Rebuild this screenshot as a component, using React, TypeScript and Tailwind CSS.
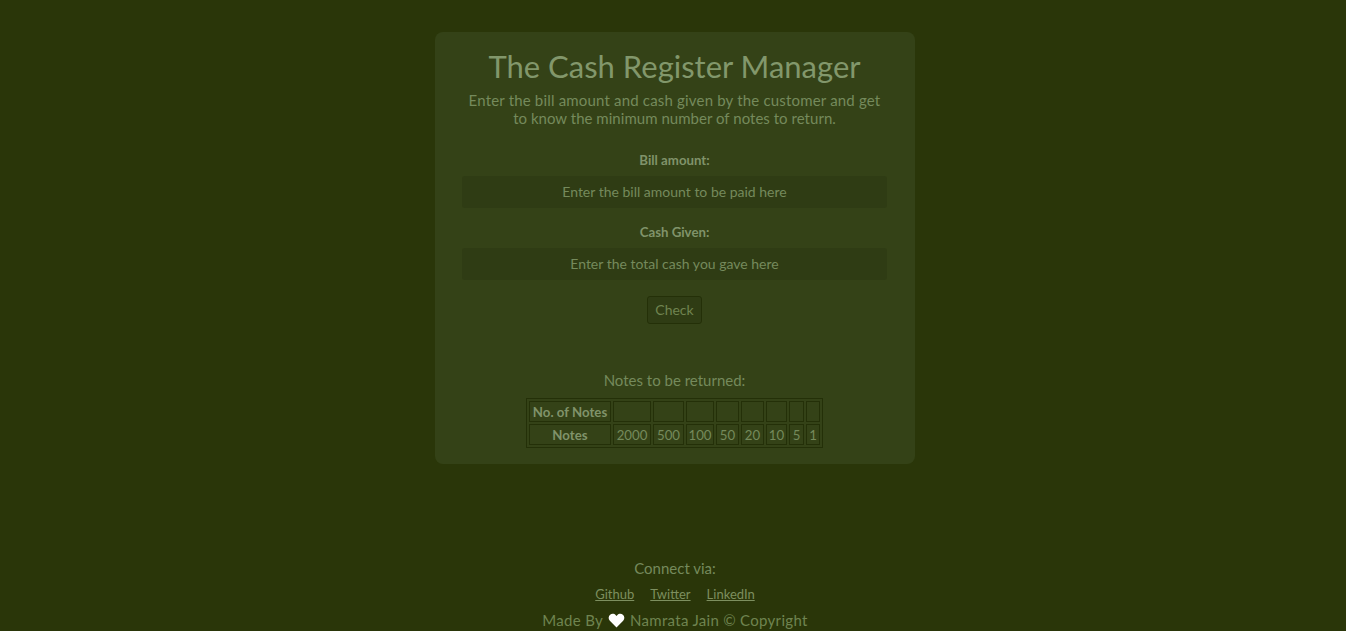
import React from 'react';

const columns = [
  { note: 2000, width: 'w-[38px]' },
  { note: 500, width: 'w-[31px]' },
  { note: 100, width: 'w-[28px]' },
  { note: 50, width: 'w-[23px]' },
  { note: 20, width: 'w-[23px]' },
  { note: 10, width: 'w-[21px]' },
  { note: 5, width: 'w-[15px]' },
  { note: 1, width: 'w-[14px]' },
];
const cell = 'border border-[#243008] p-0 h-[21px] text-center';

export default function App() {
  return (
    <div className="h-[631px] overflow-hidden bg-[#2a3609] pl-[4px] text-center text-[#7d8f5f] font-['Lato','Noto_Sans',sans-serif]">
      <main className="mx-auto w-[480px] pt-[32px]">
        <section className="h-[432px] rounded-[8px] bg-[#344217] pl-[27px] pr-[28px] pt-[16px]">
          <h1 className="text-[31px] leading-[36px] font-normal text-[#82976b]">The Cash Register Manager</h1>
          <p className="mt-[7px] text-[15px] leading-[18px] text-[#758a5c]">
            <span className="tracking-[0.18px]">Enter the bill amount and cash given by the customer and get</span>
            <br />
            <span className="tracking-[0.03px]">to know the minimum number of notes to return.</span>
          </p>

          <label className="mt-[24px] block text-[13.25px] leading-[18px] font-bold text-[#80936a]">Bill amount:</label>
          <input
            placeholder="Enter the bill amount to be paid here"
            className="mt-[7px] block h-[32px] w-full rounded-[3px] bg-[#2f3c14] pb-[2px] text-center text-[14px] outline-none placeholder:text-[#758a5c]"
          />

          <label className="mt-[15px] block text-[13.25px] leading-[18px] font-bold text-[#80936a]">Cash Given:</label>
          <input
            placeholder="Enter the total cash you gave here"
            className="mt-[7px] block h-[32px] w-full rounded-[3px] bg-[#2f3c14] pb-[2px] text-center text-[14px] outline-none placeholder:text-[#758a5c]"
          />

          <button className="mx-auto mt-[16px] block h-[28px] w-[55px] rounded-[3px] border border-[#243008] bg-[#2f3c14] pb-[2px] text-[14px] text-[#6f8450]">
            Check
          </button>

          <h2 className="mt-[47px] text-[15px] leading-[18px] font-normal text-[#758a5c]">Notes to be returned:</h2>
          <table className="mx-auto mt-[9px] table-fixed w-[297px] border-separate border-spacing-[2px] border border-[#243008] text-[13.25px] leading-[18px]">
            <tbody>
              <tr>
                <th className={cell + ' w-[82px] font-bold text-[#80936a]'}>No. of Notes</th>
                {columns.map((c) => (
                  <td key={c.note} className={cell + ' ' + c.width}></td>
                ))}
              </tr>
              <tr>
                <th className={cell + ' font-bold text-[#80936a]'}>Notes</th>
                {columns.map((c) => (
                  <td key={c.note} className={cell + ' text-[#758a5c]'}>{c.note}</td>
                ))}
              </tr>
            </tbody>
          </table>
        </section>
      </main>

      <footer className="mt-[95px]">
        <p className="text-[15px] leading-[18px] text-[#758a5c]">Connect via:</p>
        <ul className="mt-[8px] flex justify-center gap-[16px] text-[13px] leading-[18px] text-[#7d8f5f] underline">
          <li>Github</li>
          <li>Twitter</li>
          <li>LinkedIn</li>
        </ul>
        <p className="mt-[7px] flex items-center justify-center text-[15px] leading-[20px] tracking-[0.3px] text-[#6f8450]">
          Made By
          <svg viewBox="0 0 24 24" className="mx-[5px] h-[17px] w-[17px] fill-white">
            <path d="M12 22 2.600 12.400C.2 9.900.4 6 3 3.900c2.500-2 6-1.500 8 .7l1 1.200 1-1.200c2-2.200 5.500-2.700 8-.7 2.600 2.100 2.800 6 .4 8.500L12 22z" />
          </svg>
          Namrata Jain © Copyright
        </p>
      </footer>
    </div>
  );
}
